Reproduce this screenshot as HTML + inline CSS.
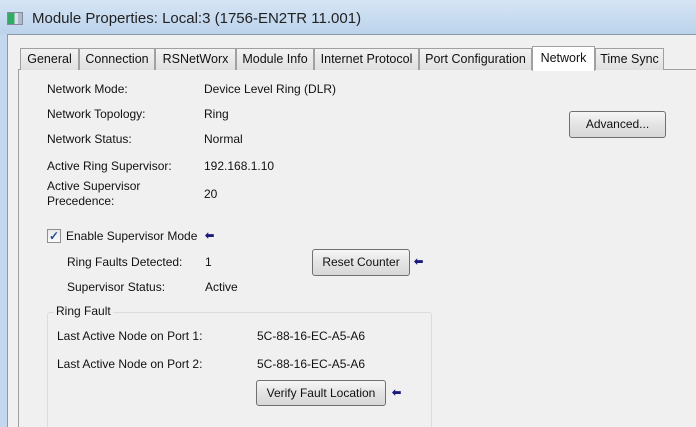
<!DOCTYPE html>
<html style="width:696px;height:427px;overflow:hidden"><head><style>
*{margin:0;padding:0;box-sizing:border-box}
body{width:696px;height:427px;overflow:hidden;background:#c3d8ee;font-family:"Liberation Sans",sans-serif;font-size:12px;color:#111;position:relative}
.a{position:absolute;white-space:nowrap}
#tb{position:absolute;left:0;top:0;width:696px;height:34px;background:linear-gradient(#d6e5f4,#bcd3ec)}
#cl{position:absolute;left:7px;top:34px;width:689px;height:393px;background:#f0f0f0;border-top:1px solid #8a9aab;border-left:1px solid #8a9aab}
#pn{position:absolute;left:18px;top:69px;width:678px;height:358px;background:#f0f0f0;border-top:1px solid #a0a0a0;border-left:1px solid #a0a0a0}
.tab{position:absolute;top:48px;height:22px;background:linear-gradient(#f2f2f2,#e0e0e0);border:1px solid #a0a0a0;border-bottom:none;text-align:center;line-height:21px;font-size:12.5px}
.sel{top:46px;height:25px;background:#fff;line-height:22px;z-index:2;border-bottom:none}
.btn{position:absolute;border:1px solid #707070;border-radius:3px;background:linear-gradient(#f6f6f6,#e4e4e4 50%,#d8d8d8);text-align:center;font-size:12px}
.ar{position:absolute;color:#1a1a7a;font-size:11px;font-weight:bold}
</style></head><body>
<div id="tb"></div>
<div class="a" style="left:7px;top:12px;width:16px;height:13px;background:linear-gradient(90deg,#3a6 0 45%,#dde 45% 70%,#abc 70%);border:1px solid #889"></div>
<div class="a" style="left:32px;top:10px;font-size:15px;color:#222">Module Properties: Local:3 (1756-EN2TR 11.001)</div>
<div id="cl"></div>
<div id="pn"></div>
<div class="tab" style="left:20px;width:59px">General</div>
<div class="tab" style="left:79px;width:76px">Connection</div>
<div class="tab" style="left:155px;width:81px">RSNetWorx</div>
<div class="tab" style="left:236px;width:78px">Module Info</div>
<div class="tab" style="left:314px;width:105px">Internet Protocol</div>
<div class="tab" style="left:419px;width:113px">Port Configuration</div>
<div class="tab sel" style="left:532px;width:63px">Network</div>
<div class="tab" style="left:595px;width:69px">Time Sync</div>

<div class="a" style="left:47px;top:82px">Network Mode:</div><div class="a" style="left:204px;top:82px">Device Level Ring (DLR)</div>
<div class="a" style="left:47px;top:107px">Network Topology:</div><div class="a" style="left:204px;top:107px">Ring</div>
<div class="a" style="left:47px;top:132px">Network Status:</div><div class="a" style="left:204px;top:132px">Normal</div>
<div class="a" style="left:47px;top:159px">Active Ring Supervisor:</div><div class="a" style="left:204px;top:159px">192.168.1.10</div>
<div class="a" style="left:47px;top:179px;line-height:15px">Active Supervisor<br>Precedence:</div><div class="a" style="left:204px;top:187px">20</div>
<div class="btn" style="left:569px;top:111px;width:97px;height:27px;line-height:25px">Advanced...</div>

<div class="a" style="left:47px;top:229px;width:14px;height:14px;border:1px solid #8e8f8f;background:linear-gradient(#e8e8e8,#fafafa);color:#2a4a9a;font-size:12px;line-height:12px;text-align:center;font-weight:bold">✓</div>
<div class="a" style="left:66px;top:229px">Enable Supervisor Mode</div>
<div class="ar" style="left:205px;top:229px">⬅</div>
<div class="a" style="left:67px;top:255px">Ring Faults Detected:</div><div class="a" style="left:205px;top:255px">1</div>
<div class="btn" style="left:312px;top:249px;width:98px;height:27px;line-height:25px">Reset Counter</div>
<div class="ar" style="left:414px;top:255px">⬅</div>
<div class="a" style="left:67px;top:280px">Supervisor Status:</div><div class="a" style="left:205px;top:280px">Active</div>

<div class="a" style="left:47px;top:312px;width:385px;height:115px;border:1px solid #dcdcdc;border-bottom:none;border-radius:3px 3px 0 0"></div>
<div class="a" style="left:54px;top:304px;background:#f0f0f0;padding:0 2px">Ring Fault</div>
<div class="a" style="left:57px;top:329px">Last Active Node on Port 1:</div><div class="a" style="left:257px;top:329px">5C-88-16-EC-A5-A6</div>
<div class="a" style="left:57px;top:357px">Last Active Node on Port 2:</div><div class="a" style="left:257px;top:357px">5C-88-16-EC-A5-A6</div>
<div class="btn" style="left:256px;top:380px;width:130px;height:26px;line-height:24px">Verify Fault Location</div>
<div class="ar" style="left:392px;top:386px">⬅</div>
</body></html>
